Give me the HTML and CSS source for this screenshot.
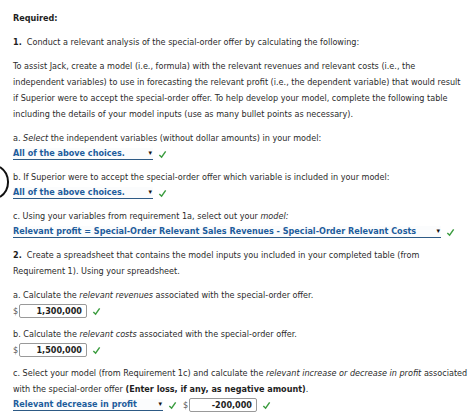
FILE: index.html
```html
<!DOCTYPE html>
<html>
<head>
<meta charset="utf-8">
<link rel="stylesheet" href="styles.css">
</head>
<body>
<svg class="mark" width="12" height="40" viewBox="0 0 12 40"><path d="M0 5 A 18 18 0 0 1 0 35" fill="none" stroke="#111" stroke-width="2"/></svg>
<div class="page">
  <p class="req"><b>Required:</b></p>
  <p><b>1.</b>&nbsp; Conduct a relevant analysis of the special-order offer by calculating the following:</p>
  <p class="nw">To assist Jack, create a model (i.e., formula) with the relevant revenues and relevant costs (i.e., the<br>independent variables) to use in forecasting the relevant profit (i.e., the dependent variable) that would result<br>if Superior were to accept the special-order offer. To help develop your model, complete the following table<br>including the details of your model inputs (use as many bullet points as necessary).</p>
  <div class="q">
    <p>a. <i>Select</i> the independent variables (without dollar amounts) in your model:</p>
    <div class="row"><span class="sel w1">All of the above choices.<span class="arr">▾</span></span><svg class="ok" viewBox="0 0 10 10"><path d="M1.5 5.5 L4 8 L8.5 1.5" fill="none" stroke="#3b9c3f" stroke-width="1.6"/></svg></div>
  </div>
  <div class="q">
    <p>b. If Superior were to accept the special-order offer which variable is included in your model:</p>
    <div class="row"><span class="sel w1">All of the above choices.<span class="arr">▾</span></span><svg class="ok" viewBox="0 0 10 10"><path d="M1.5 5.5 L4 8 L8.5 1.5" fill="none" stroke="#3b9c3f" stroke-width="1.6"/></svg></div>
  </div>
  <div class="q">
    <p>c. Using your variables from requirement 1a, select out your <i>model:</i></p>
    <div class="row"><span class="sel w2">Relevant profit = Special-Order Relevant Sales Revenues - Special-Order Relevant Costs<span class="arr">▾</span></span><svg class="ok" viewBox="0 0 10 10"><path d="M1.5 5.5 L4 8 L8.5 1.5" fill="none" stroke="#3b9c3f" stroke-width="1.6"/></svg></div>
  </div>
  <p class="sec nw"><b>2.</b>&nbsp; Create a spreadsheet that contains the model inputs you included in your completed table (from<br>Requirement 1). Using your spreadsheet.</p>
  <div class="q">
    <p>a. Calculate the <i>relevant revenues</i> associated with the special-order offer.</p>
    <div class="row"><span class="cur">$</span><span class="inp">1,300,000</span><svg class="ok" viewBox="0 0 10 10"><path d="M1.5 5.5 L4 8 L8.5 1.5" fill="none" stroke="#3b9c3f" stroke-width="1.6"/></svg></div>
  </div>
  <div class="q">
    <p>b. Calculate the <i>relevant costs</i> associated with the special-order offer.</p>
    <div class="row"><span class="cur">$</span><span class="inp">1,500,000</span><svg class="ok" viewBox="0 0 10 10"><path d="M1.5 5.5 L4 8 L8.5 1.5" fill="none" stroke="#3b9c3f" stroke-width="1.6"/></svg></div>
  </div>
  <div class="q">
    <p class="nw">c. Select your model (from Requirement 1c) and calculate the <i>relevant increase or decrease in profit</i> associated<br>with the special-order offer <b>(Enter loss, if any, as negative amount)</b>.</p>
    <div class="row"><span class="sel w3">Relevant decrease in profit<span class="arr">▾</span></span><svg class="ok" viewBox="0 0 10 10"><path d="M1.5 5.5 L4 8 L8.5 1.5" fill="none" stroke="#3b9c3f" stroke-width="1.6"/></svg><span class="cur gap">$</span><span class="inp">-200,000</span><svg class="ok" viewBox="0 0 10 10"><path d="M1.5 5.5 L4 8 L8.5 1.5" fill="none" stroke="#3b9c3f" stroke-width="1.6"/></svg></div>
  </div>
</div>
</body>
</html>
```
FILE: styles.css
```css
html, body { margin: 0; padding: 0; background: #fff; }
body {
  font-family: "DejaVu Sans", Verdana, sans-serif;
  font-size: 8.1px;
  line-height: 16px;
  color: #2b2b2b;
  position: relative;
  width: 474px;
  height: 420px;
  overflow: hidden;
}
.page { padding: 10px 2px 0 13px; }
p { margin: 0 0 8px 0; }
.nw { white-space: nowrap; }
b { color: #1e1e1e; }
.q { margin-bottom: 7px; }
.q p { margin: 0; }
.sec { margin-bottom: 8px; }
.row { display: flex; align-items: center; height: 16px; }
.sel {
  display: inline-flex;
  align-items: center;
  justify-content: space-between;
  box-sizing: border-box;
  height: 12px;
  line-height: 11px;
  font-weight: bold;
  color: #1e5d9c;
  border-bottom: 1.5px solid #2d5a85;
  background: #fbfcfd;
  padding-right: 1px;
}
.w1 { width: 140px; }
.w2 { width: 428px; }
.w3 { width: 150px; }
.arr { color: #111; font-size: 7px; font-weight: normal; }
.ok { width: 9px; height: 9px; margin-left: 5px; }
.cur { color: #555; width: 6px; }
.cur.gap { margin-left: 6px; }
.inp {
  box-sizing: border-box;
  width: 68px;
  height: 14px;
  line-height: 12px;
  border: 1px solid #999;
  border-radius: 2px;
  text-align: right;
  padding-right: 4px;
  font-weight: bold;
  color: #1e1e1e;
}
.mark { position: absolute; left: 0; top: 162px; }
```
